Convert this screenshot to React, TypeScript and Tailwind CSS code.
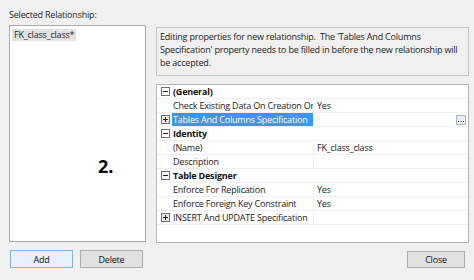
import React from 'react';

type Row =
    | { kind: 'cat'; label: string }
    | { kind: 'prop'; label: string; value?: string; expandable?: boolean; selected?: boolean; ellipsis?: boolean };

const rows: Row[] = [
    { kind: 'cat', label: '(General)' },
    { kind: 'prop', label: 'Check Existing Data On Creation Or Re-Enabling', value: 'Yes' },
    { kind: 'prop', label: 'Tables And Columns Specification', expandable: true, selected: true, ellipsis: true },
    { kind: 'cat', label: 'Identity' },
    { kind: 'prop', label: '(Name)', value: 'FK_class_class' },
    { kind: 'prop', label: 'Description', value: '' },
    { kind: 'cat', label: 'Table Designer' },
    { kind: 'prop', label: 'Enforce For Replication', value: 'Yes' },
    { kind: 'prop', label: 'Enforce Foreign Key Constraint', value: 'Yes' },
    { kind: 'prop', label: 'INSERT And UPDATE Specification', expandable: true },
];

const Toggle: React.FC<{ open: boolean }> = ({ open }) => (
    <svg width="9" height="9" viewBox="0 0 9 9" className="block">
        <rect x="0.5" y="0.5" width="8" height="8" fill={open ? '#ffffff' : '#e8e8e8'} stroke="#6f6f6f" />
        <line x1="2" y1="4.5" x2="7" y2="4.5" stroke="#222" />
        {!open && <line x1="4.5" y1="2" x2="4.5" y2="7" stroke="#222" />}
    </svg>
);

const GridRow: React.FC<{ row: Row }> = ({ row }) => {
    if (row.kind === 'cat') {
        return (
            <div className="flex h-[14px] items-center border-b border-[#f0f0f0]">
                <div className="w-[15px] shrink-0 flex justify-center pl-[1px]">
                    <Toggle open />
                </div>
                <span className="font-bold text-[#111] pl-[1px] leading-none">{row.label}</span>
            </div>
        );
    }
    return (
        <div className="flex h-[14px] items-stretch border-b border-[#f0f0f0]">
            <div className="w-[15px] shrink-0 flex items-center justify-center pl-[1px]">
                {row.expandable && <Toggle open={false} />}
            </div>
            <div
                className={`w-[142px] shrink-0 flex items-center pl-[1px] overflow-hidden whitespace-nowrap border-r border-[#f0f0f0] ${
                    row.selected ? 'bg-[#3399ff] text-white' : 'text-[#222]'
                }`}
            >
                {row.label}
            </div>
            <div className="flex-1 flex items-center pl-[3px] text-[#222] relative">
                {row.value}
                {row.ellipsis && (
                    <div className="absolute right-[2px] top-[2px] w-[10px] h-[10px] border border-[#a9b6c6] bg-[#e8eef6] flex items-center justify-center">
                        <svg width="6" height="2" viewBox="0 0 6 2" className="block mt-[3px]">
                            <rect x="0" y="0" width="1" height="1" fill="#333" />
                            <rect x="2.5" y="0" width="1" height="1" fill="#333" />
                            <rect x="5" y="0" width="1" height="1" fill="#333" />
                        </svg>
                    </div>
                )}
            </div>
        </div>
    );
};

export default function App() {
    return (
        <div
            className="w-[474px] h-[280px] bg-[#f0f0f0] flex gap-[10px] pl-[9px] text-[9px] tracking-[-0.2px] text-[#1e1e1e] overflow-hidden"
            style={{ fontFamily: '"Open Sans", "Noto Sans", sans-serif' }}
        >
            {/* left column */}
            <div className="w-[137px] flex flex-col pt-[9px]">
                <div className="h-[16px] leading-[12px]">Selected Relationship:</div>
                <div className="relative h-[217px] bg-white border border-[#acacac] p-[2px]">
                    <div className="inline-block bg-[#e3e3e3] px-[2px] h-[12px] leading-[12px]">FK_class_class*</div>
                    <div className="absolute left-[88px] top-[131px] text-[18px] font-bold text-black leading-none tracking-normal">2.</div>
                </div>
                <div className="flex gap-[7px] pl-[1px] mt-[8px]">
                    <button className="w-[63px] h-[18px] border border-[#7eb4ea] bg-[#e5f1fb] leading-none text-[#111]">Add</button>
                    <button className="w-[63px] h-[18px] border border-[#adadad] bg-[#e1e1e1] leading-none text-[#111]">Delete</button>
                </div>
            </div>

            {/* right column */}
            <div className="w-[313px] flex flex-col pt-[27px]">
                <div className="h-[49px] border border-[#c6c6c6] bg-[#f0f0f0] px-[3px] pt-[2px] leading-[13px] text-[#222]">
                    Editing properties for new relationship.&nbsp; The 'Tables And Columns Specification' property needs to be filled in before the new relationship will be accepted.
                </div>
                <div className="mt-[8px] h-[159px] border border-[#b5b5b5] bg-white overflow-hidden">
                    {rows.map((r, i) => (
                        <GridRow key={i} row={r} />
                    ))}
                </div>
                <div className="flex justify-end pr-[4px] mt-[8px]">
                    <button className="w-[58px] h-[17px] border border-[#adadad] bg-[#e1e1e1] leading-none text-[#111]">Close</button>
                </div>
            </div>
        </div>
    );
}
